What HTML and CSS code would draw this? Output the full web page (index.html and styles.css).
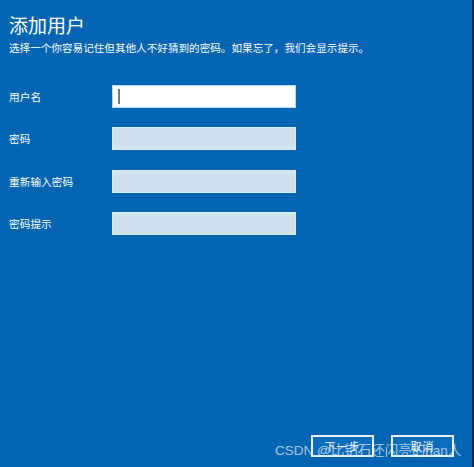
FILE: index.html
```html
<html>
<head>

	<meta charset="utf-8">
	<title>添加用户</title>

	<link rel="stylesheet" href="styles.css">

</head>
<body>

	<div class="page">

		<h1>添加用户</h1>
		<p class="intro">选择一个你容易记住但其他人不好猜到的密码。如果忘了，我们会显示提示。</p>

		<div class="form">
			<label>用户名</label>
			<div class="field active"><span class="caret"></span></div>

			<label>密码</label>
			<div class="field"></div>

			<label>重新输入密码</label>
			<div class="field"></div>

			<label>密码提示</label>
			<div class="field"></div>
		</div>

		<div class="actions">
			<span class="btn">下一步</span>
			<span class="btn">取消</span>
		</div>

	</div>

	<p class="mark">CSDN @比钻石还闪亮的nan人</p>

</body>
</html>
```

FILE: styles.css
```css
* {
	margin: 0;
	padding: 0;
	box-sizing: border-box;
}


body {
	font-family: "Noto Sans CJK SC", "Liberation Sans", sans-serif;
	background: #0265b4;
	color: #fff;
	width: 474px;
	height: 467px;
	overflow: hidden;
	position: relative;
	border-right: 2px solid #17263a;
}


.page {
	height: 100%;
	display: flex;
	flex-direction: column;
	padding: 12px 0 10px 9px;
}

h1 {
	font-size: 19px;
	font-weight: 400;
	line-height: 26px;
}

.intro {
	font-size: 10.6px;
	line-height: 14px;
	margin-top: 3px;
}


.form {
	display: grid;
	grid-template-columns: 103px 184px;
	grid-auto-rows: 23px;
	row-gap: 19.3px;
	margin-top: 30px;
}

.form label {
	font-size: 10.7px;
	line-height: 23px;
}

.field {
	background: #cfe1f1;
	border: 1px solid #dceaf6;
	position: relative;
}

.field.active {
	background: #fff;
	border-color: #bcd6ee;
}

.caret {
	position: absolute;
	left: 5px;
	top: 3px;
	width: 2px;
	height: 15px;
	background: #7a7a7a;
}


.actions {
	margin-top: auto;
	display: flex;
	justify-content: flex-end;
	gap: 17px;
	padding-right: 18px;
}

.btn {
	width: 63px;
	height: 22px;
	border: 2px solid #e8f0f8;
	background: #0b6dbd;
	font-size: 11px;
	line-height: 18px;
	text-align: center;
	letter-spacing: 1px;
}


/* CSDN watermark over the buttons */
.mark {
	position: absolute;
	left: 275px;
	top: 443px;
	font-family: "Liberation Sans", "Noto Sans CJK SC", sans-serif;
	font-size: 13.5px;
	line-height: 16px;
	color: rgba(225, 232, 240, 0.75);
	white-space: nowrap;
}
```
